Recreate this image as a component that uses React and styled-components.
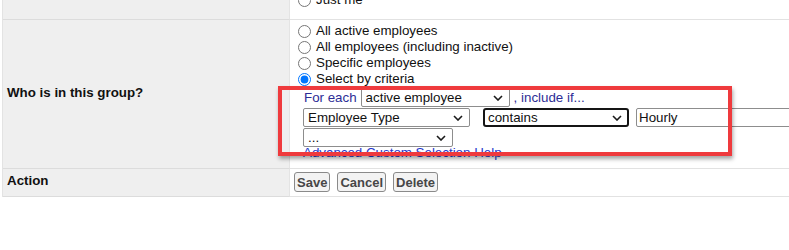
import React from "react";
import styled, { createGlobalStyle } from "styled-components";

const Global = createGlobalStyle`
  html, body { margin: 0; padding: 0; background: #ffffff; }
  body {
    font-family: "Liberation Sans", Arial, sans-serif;
    font-size: 13.33px;
    color: #111;
    overflow: hidden;
  }
`;

const Page = styled.div`
  margin-top: -11px;
  padding-left: 2px;
  width: 840px;
`;

const Table = styled.div`
  display: grid;
  grid-template-columns: 287px 1fr;
  border-left: 1px solid #e3e3e3;
`;

const LabelCell = styled.div`
  display: flex;
  align-items: center;
  box-sizing: border-box;
  padding: 0 0 ${p => (p.$lift ? 4 : 0)}px 4px;
  background: #efefef;
  border-right: 1px solid #e4e4e4;
  border-bottom: 1px solid #dcdcdc;
  font-weight: bold;
  font-size: 13.33px;
  color: #111;
`;

const ValueCell = styled.div`
  position: relative;
  box-sizing: border-box;
  padding: ${p => p.$pad};
  background: #ffffff;
  border-bottom: 1px solid #e2e2e2;
`;

const RadioRow = styled.label`
  display: flex;
  align-items: center;
  height: 16px;
  line-height: 16px;
  white-space: nowrap;
  color: #111;
`;

const Radio = styled.input`
  width: 13px;
  height: 13px;
  margin: 0 5px 0 4px;
`;

const Criteria = styled.div`
  margin: 1px 0 0 9px;
  display: flex;
  flex-direction: column;
  gap: 1px;
`;

const Line = styled.div`
  display: flex;
  align-items: center;
  height: 19px;
  white-space: nowrap;
`;

const BlueText = styled.span`
  color: #2d2d96;
  margin: ${p => p.$m || "0"};
`;

const SelectBox = styled.span`
  position: relative;
  display: inline-flex;
  flex: none;
  width: ${p => p.$w}px;
  height: 19px;
  margin: ${p => p.$m || "0"};
`;

const NativeSelect = styled.select`
  appearance: none;
  -webkit-appearance: none;
  width: 100%;
  height: 100%;
  box-sizing: border-box;
  margin: 0;
  padding: 0 18px 0 ${p => (p.$focused ? 3 : 4)}px;
  font: 13.33px "Liberation Sans", Arial, sans-serif;
  color: #111;
  background: #ffffff;
  border: ${p => (p.$focused ? "2px solid #151515" : "1px solid #8d8d8d")};
  border-radius: ${p => (p.$focused ? "3px" : "2px")};
  outline: none;
`;

const Chevron = styled.svg`
  position: absolute;
  right: 7px;
  top: 50%;
  margin-top: -3px;
  pointer-events: none;
`;

const TextInput = styled.input`
  flex: none;
  width: 200px;
  height: 19px;
  box-sizing: border-box;
  margin: 0 0 0 7px;
  padding: 0 2px;
  font: 13.33px "Liberation Sans", Arial, sans-serif;
  color: #111;
  border: 1px solid #8d8d8d;
  border-radius: 2px;
  outline: none;
`;

const HelpLink = styled.a`
  display: block;
  height: 15px;
  line-height: 15px;
  margin-top: -3px;
  color: #2638cc;
  text-decoration: none;
  white-space: nowrap;
`;

const Annotation = styled.div`
  position: absolute;
  left: -12px;
  top: 66px;
  width: 454px;
  height: 70px;
  box-sizing: border-box;
  border: 4px solid #ef3a3d;
  box-shadow: 1px 3px 4px rgba(0, 0, 0, 0.35);
  pointer-events: none;
`;

const ButtonBar = styled.div`
  display: flex;
  gap: 7px;
`;

const Button = styled.button`
  height: 20px;
  box-sizing: border-box;
  margin: 0;
  padding: 0 2px;
  font: bold 13px "Liberation Sans", Arial, sans-serif;
  color: #474747;
  background: #f3f3f3;
  border: 1px solid #8a8a8a;
  border-radius: 3px;
`;

function Select({ width, value, focused, margin }) {
  return (
    <SelectBox $w={width} $m={margin}>
      <NativeSelect $focused={focused} defaultValue={value}>
        <option value={value}>{value}</option>
      </NativeSelect>
      <Chevron width="10" height="6" viewBox="0 0 10 6">
        <path d="M1 1 L5 5 L9 1" fill="none" stroke="#1a1a1a" strokeWidth="1.6" />
      </Chevron>
    </SelectBox>
  );
}

export default function App() {
  return (
    <>
      <Global />
      <Page>
        <Table>
          <LabelCell />
          <ValueCell $pad="3px 0 11px 4px">
            <RadioRow>
              <Radio type="radio" name="owner" />
              Just me
            </RadioRow>
          </ValueCell>

          <LabelCell $lift>Who is in this group?</LabelCell>
          <ValueCell $pad="3px 0 8px 4px">
            <RadioRow>
              <Radio type="radio" name="who" />
              All active employees
            </RadioRow>
            <RadioRow>
              <Radio type="radio" name="who" />
              All employees (including inactive)
            </RadioRow>
            <RadioRow>
              <Radio type="radio" name="who" />
              Specific employees
            </RadioRow>
            <RadioRow>
              <Radio type="radio" name="who" defaultChecked />
              Select by criteria
            </RadioRow>
            <Criteria>
              <Line>
                <BlueText $m="0 0 0 1px">For each</BlueText>
                <Select width={149} value="active employee" margin="0 0 0 4px" />
                <BlueText $m="0 0 0 4px">, include if...</BlueText>
              </Line>
              <Line>
                <Select width={167} value="Employee Type" />
                <Select width={146} value="contains" focused margin="0 0 0 13px" />
                <TextInput defaultValue="Hourly" />
              </Line>
              <Line>
                <Select width={150} value="..." />
              </Line>
              <HelpLink href="#">Advanced Custom Selection Help</HelpLink>
            </Criteria>
            <Annotation />
          </ValueCell>

          <LabelCell $lift>Action</LabelCell>
          <ValueCell $pad="3px 0 4px 4px">
            <ButtonBar>
              <Button>Save</Button>
              <Button>Cancel</Button>
              <Button>Delete</Button>
            </ButtonBar>
          </ValueCell>
        </Table>
      </Page>
    </>
  );
}
